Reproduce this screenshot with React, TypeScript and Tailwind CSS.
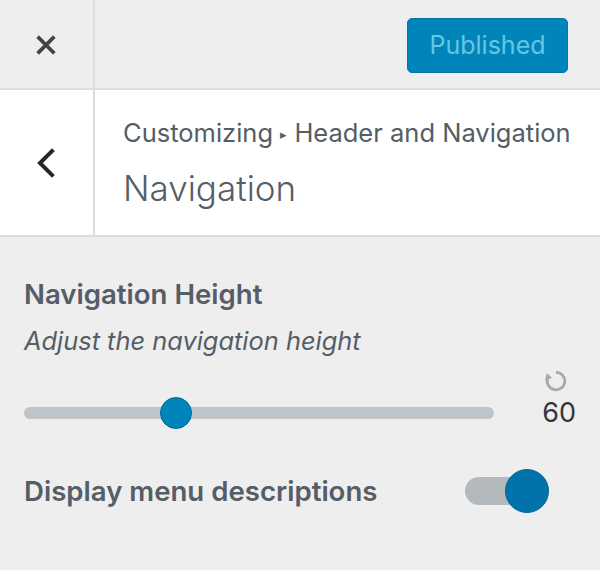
// reset arrow (dashicons-ish undo circle)
const ResetIcon = () => (
	<svg width="30" height="30" viewBox="0 0 24 24" fill="none">
		<path d="M12 5 A7 7 0 1 1 5.24 10.19" stroke="#a7aaad" strokeWidth="2.2" fill="none" />
		<path d="M2.4 10.6 L8.4 10.6 L5.6 5.4 Z" fill="#a7aaad" transform="rotate(-20 5.4 8.6)" />
	</svg>
);

const CloseIcon = () => (
	<svg width="20" height="20" viewBox="0 0 20 20">
		<path d="M3 3 L17 17 M17 3 L3 17" stroke="#444444" strokeWidth="3.8" strokeLinecap="square" />
	</svg>
);

const BackIcon = () => (
	<svg width="22" height="32" viewBox="0 0 22 32">
		<polyline points="17,4 5,16 17,28" fill="none" stroke="#23282d" strokeWidth="4" strokeLinecap="square" />
	</svg>
);

const App = () => {
	return (
		<div className="w-[600px] h-[570px] bg-[#eeeeee] font-['Inter',sans-serif] text-[#555d66] overflow-hidden">
			{/* top bar */}
			<div className="flex h-[90px] border-b-2 border-[#dddddd]">
				<div className="w-[95px] border-r-2 border-[#dddddd] flex items-center justify-center pr-[2px] pt-[1px]">
					<CloseIcon />
				</div>
				<div className="flex-1 flex items-center justify-end pr-[32px] pt-[2px]">
					<button className="w-[161px] h-[55px] rounded-[5px] bg-[#0085ba] border border-[#0077a8] text-[#66c6e4] text-[25px] leading-none">
						Published
					</button>
				</div>
			</div>

			{/* section header */}
			<div className="flex h-[147px] bg-white border-b-2 border-[#dddddd]">
				<div className="w-[95px] border-r-2 border-[#dddddd] flex items-center justify-center pr-[2px]">
					<BackIcon />
				</div>
				<div className="flex-1 pl-[28px] pt-[28px]">
					<div className="text-[25.5px] leading-[30px] whitespace-nowrap">
						Customizing <span className="text-[13px] relative top-[-3px]">▸</span> Header and Navigation
					</div>
					<div className="text-[35px] leading-[44px] font-light mt-[14px]">Navigation</div>
				</div>
			</div>

			{/* controls */}
			<div className="px-[24px] pt-[41px]">
				<div className="text-[27.6px] leading-[32px] font-semibold">Navigation Height</div>
				<div className="text-[25.4px] leading-[32px] italic mt-[15px]">Adjust the navigation height</div>

				<div className="flex items-end mt-[9px]">
					<div className="relative w-[470px] h-[34px] flex items-center">
						<div className="w-full h-[12px] rounded-full bg-[#bfc4c8]" />
						<div className="absolute left-[136px] top-[1px] w-[32px] h-[32px] rounded-full bg-[#0085ba] border-[1.5px] border-[#006799]" />
					</div>
					<div className="flex-1 flex flex-col items-end">
						<div className="pr-[5px]">
							<ResetIcon />
						</div>
						<div className="text-[27px] leading-[34px] text-[#32373c]">60</div>
					</div>
				</div>

				<div className="flex items-center justify-between mt-[39px]">
					<div className="text-[27.6px] leading-[32px] font-semibold">Display menu descriptions</div>
					<div className="relative w-[84px] h-[44px] mr-[27px]">
						<div className="absolute left-0 top-[8px] w-[60px] h-[28px] rounded-full bg-[#b4b9be]" />
						<div className="absolute right-0 top-0 w-[44px] h-[44px] rounded-full bg-[#0073aa] border-[1.5px] border-[#006799]" />
					</div>
				</div>
			</div>
		</div>
	);
};

export default App;
